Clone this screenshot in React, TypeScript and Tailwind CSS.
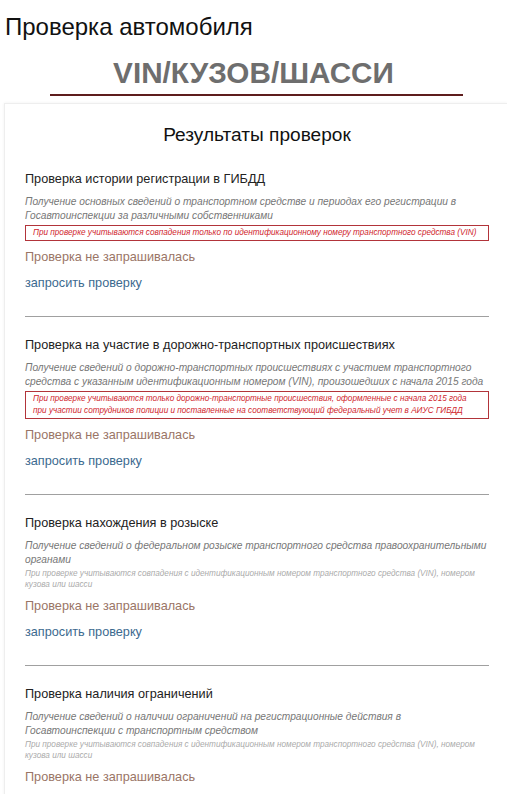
import React from 'react';

type Check = {
  title: string;
  desc: string[];
  warn?: string[];
  note?: string[];
  link?: boolean;
};

const noteVin = [
  'При проверке учитываются совпадения с идентификационным номером транспортного средства (VIN), номером',
  'кузова или шасси',
];

const checks: Check[] = [
  {
    title: 'Проверка истории регистрации в ГИБДД',
    desc: [
      'Получение основных сведений о транспортном средстве и периодах его регистрации в',
      'Госавтоинспекции за различными собственниками',
    ],
    warn: ['При проверке учитываются совпадения только по идентификационному номеру транспортного средства (VIN)'],
    link: true,
  },
  {
    title: 'Проверка на участие в дорожно-транспортных происшествиях',
    desc: [
      'Получение сведений о дорожно-транспортных происшествиях с участием транспортного',
      'средства с указанным идентификационным номером (VIN), произошедших с начала 2015 года',
    ],
    warn: [
      'При проверке учитываются только дорожно-транспортные происшествия, оформленные с начала 2015 года',
      'при участии сотрудников полиции и поставленные на соответствующий федеральный учет в АИУС ГИБДД',
    ],
    link: true,
  },
  {
    title: 'Проверка нахождения в розыске',
    desc: ['Получение сведений о федеральном розыске транспортного средства правоохранительными', 'органами'],
    note: noteVin,
    link: true,
  },
  {
    title: 'Проверка наличия ограничений',
    desc: [
      'Получение сведений о наличии ограничений на регистрационные действия в',
      'Госавтоинспекции с транспортным средством',
    ],
    note: noteVin,
  },
];

function Lines({ lines }: { lines: string[] }) {
  return (
    <>
      {lines.map((l, i) => (
        <span key={i} className="block whitespace-nowrap">
          {l}
        </span>
      ))}
    </>
  );
}

function CheckBlock({ c, last }: { c: Check; last: boolean }) {
  return (
    <div>
      <h3 className="text-[12.7px] leading-[20px] text-[#222]">{c.title}</h3>
      <p className="mt-[6px] text-[10.2px] leading-[14px] italic text-[#777]">
        <Lines lines={c.desc} />
      </p>
      {c.warn && (
        <div className="mt-[2px] border border-[#b2343a] px-[7px] py-[1px] text-[8.2px] leading-[12px] italic text-[#d0262e]">
          <Lines lines={c.warn} />
        </div>
      )}
      {c.note && (
        <p className="mt-[1px] text-[8.2px] leading-[11px] italic text-[#ababab]">
          <Lines lines={c.note} />
        </p>
      )}
      <div className="mt-[6px] text-[12.7px] leading-[20px] text-[#9a7566]">Проверка не запрашивалась</div>
      {c.link && (
        <a href="#" className="mt-[6px] block text-[12.7px] leading-[20px] text-[#3c6a8f]">
          запросить проверку
        </a>
      )}
      {!last && <div className="mt-[23px] mb-[18px] h-[1px] bg-[#a0a0a0]" />}
    </div>
  );
}

export default function App() {
  return (
    <div className="min-h-screen bg-white font-['Liberation_Sans',Arial,sans-serif]">
      {/* Header */}
      <h1 className="pl-[5px] pt-[13px] text-[24px] leading-[28px] text-[#111]">Проверка автомобиля</h1>
      <div className="mt-[15px] text-center text-[29.7px] font-bold leading-[34px] text-[#6e6e6e]">
        VIN/КУЗОВ/ШАССИ
      </div>
      <div className="mx-[50px] mt-[4px] h-[2px] w-[413px] bg-[#5e1d1d]" />

      {/* Results card */}
      <div className="ml-[4px] mt-[7px] border-l border-t border-[#eeeeee] pl-[20px] pr-[18px] pt-[16px] pb-[20px] shadow-[0_0_3px_rgba(0,0,0,0.06)]">
        <h2 className="text-center text-[19.1px] leading-[30px] text-[#111]">Результаты проверок</h2>
        <div className="mt-[19px]">
          {checks.map((c, i) => (
            <CheckBlock key={i} c={c} last={i === checks.length - 1} />
          ))}
        </div>
      </div>
    </div>
  );
}
